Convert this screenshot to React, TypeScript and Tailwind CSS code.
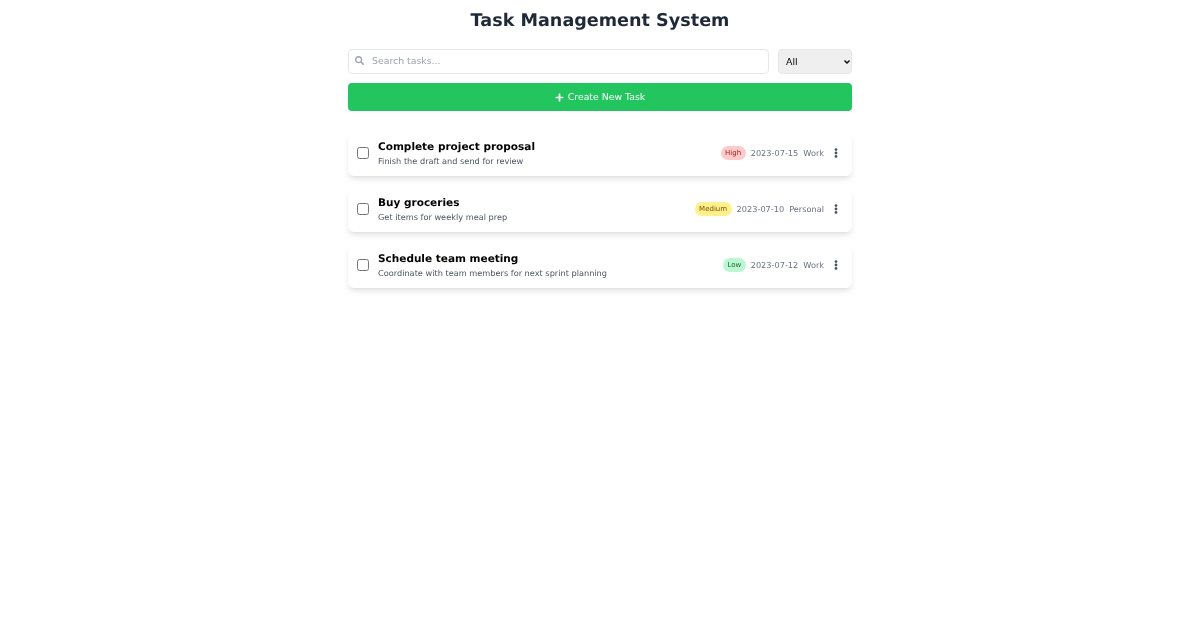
import { FaPlus, FaSearch, FaEllipsisV } from "react-icons/fa";

const tasks = [
  { title: "Complete project proposal", desc: "Finish the draft and send for review", pri: "High", badge: "bg-[#fecaca] text-[#991b1b]", date: "2023-07-15", cat: "Work" },
  { title: "Buy groceries", desc: "Get items for weekly meal prep", pri: "Medium", badge: "bg-[#fef08a] text-[#854d0e]", date: "2023-07-10", cat: "Personal" },
  { title: "Schedule team meeting", desc: "Coordinate with team members for next sprint planning", pri: "Low", badge: "bg-[#bbf7d0] text-[#166534]", date: "2023-07-12", cat: "Work" },
];

export default function App() {
  return (
    <div className="min-h-screen bg-white font-['DejaVu_Sans',sans-serif] [text-rendering:geometricPrecision]">
      <div className="mx-auto w-[504px] pt-[10px] [will-change:transform]">
        <h1 className="mb-[17px] text-center text-[17.6px] leading-[22px] font-bold text-[#1f2937]">Task Management System</h1>
        <div className="mb-[9px] flex gap-[9px]">
          <div className="relative flex-1">
            <FaSearch className="absolute top-[7px] left-[7px] h-[9px] w-[9px] text-[#9ca3af]" />
            <input
              placeholder="Search tasks..."
              className="block h-[25px] w-full rounded border border-[#e5e7eb] pr-2 pb-[2px] pl-[23px] text-[9.35px] placeholder:text-[#9ca3af]"
            />
          </div>
          <div className="relative">
            <select className="block h-[25px] w-[74px] appearance-none rounded border border-[#e5e7eb] bg-[#efefef] pt-[1px] pl-[7px] text-[9.35px] text-black">
              <option>All</option>
            </select>
            <svg viewBox="0 0 6 4" className="absolute top-[11px] right-[2px] h-[4px] w-[6px] text-black" fill="none" stroke="currentColor" strokeWidth="1.3">
              <polyline points="0.5,0.5 3,3 5.5,0.5" />
            </svg>
          </div>
        </div>
        <button className="mb-[21px] flex h-[28px] w-full items-center justify-center gap-[4px] rounded bg-[#22c55e] text-[9.35px] text-white">
          <FaPlus className="h-[9px] w-[9px]" />
          <span className="mt-[1px]">Create New Task</span>
        </button>
        <div className="flex flex-col gap-3">
          {tasks.map((t) => (
            <div key={t.title} className="flex h-[44px] items-center justify-between rounded-md bg-white pr-[11px] pb-[2px] pl-[9px] shadow-md">
              <div className="flex items-center gap-[9px]">
                <input type="checkbox" className="h-3 w-3" />
                <div>
                  <div className="text-[10.5px] leading-[14px] font-bold text-black">{t.title}</div>
                  <div className="mt-[1px] text-[8.2px] leading-[12px] text-[#4b5563]">{t.desc}</div>
                </div>
              </div>
              <div className="flex items-center gap-[5px]">
                <span className={`rounded-full px-[4.5px] py-[2px] text-[7px] leading-[10px] ${t.badge}`}>{t.pri}</span>
                <span className="text-[8.2px] text-[#6b7280]">{t.date}</span>
                <span className="text-[8.2px] text-[#6b7280]">{t.cat}</span>
                <FaEllipsisV className="mb-[1px] ml-[2px] h-[10px] w-[10px] text-[#4b5563]" />
              </div>
            </div>
          ))}
        </div>
      </div>
    </div>
  );
}
